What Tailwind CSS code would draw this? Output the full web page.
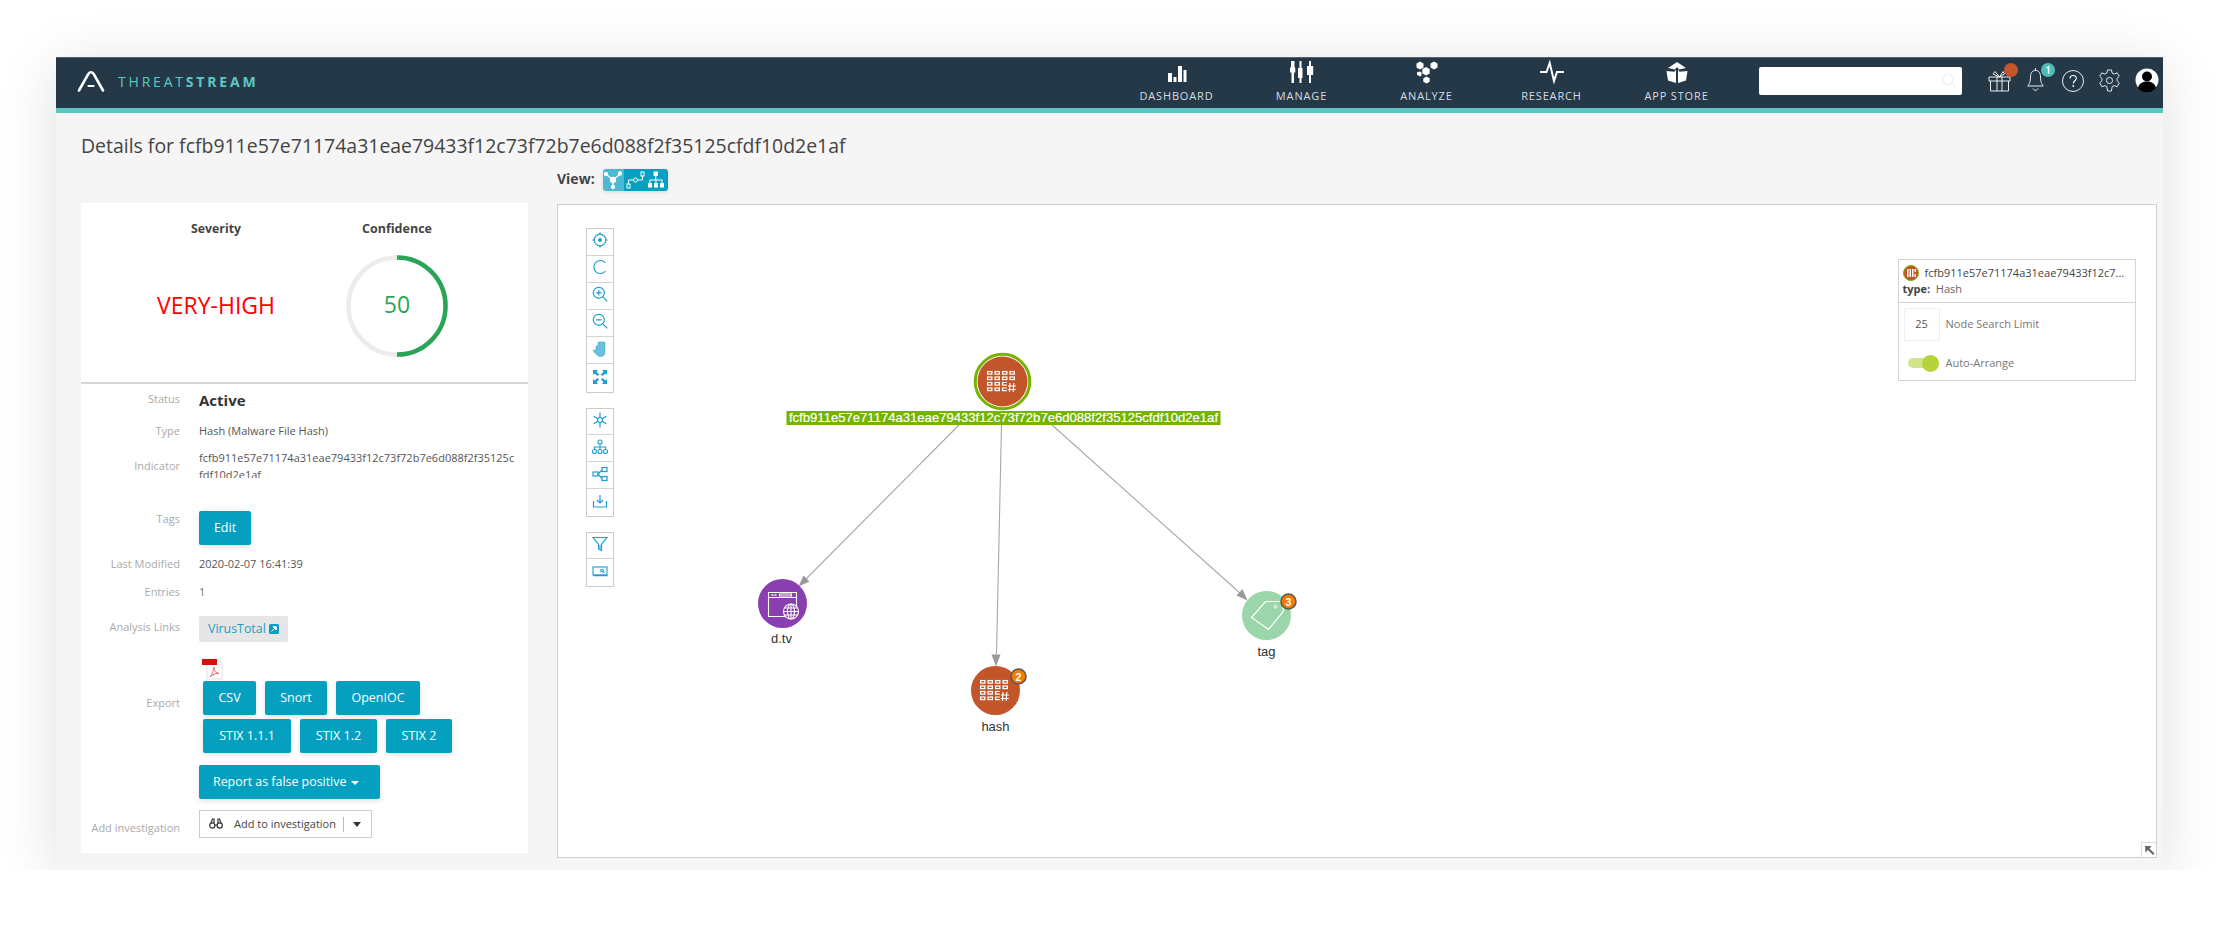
<!DOCTYPE html>
<html lang="en">
<head>
<meta charset="utf-8">
<title>ThreatStream</title>
<script src="https://cdn.jsdelivr.net/npm/@tailwindcss/browser@4"></script>
</head>
<body class="bg-white font-['Open_Sans',sans-serif] text-[#555]">
<svg width="0" height="0" class="absolute">
  <defs>
    <symbol id="hashgrid" viewBox="0 0 28 22" preserveAspectRatio="none">
      <g fill="none" stroke="#fff" stroke-width="1.200">
        <rect x="1" y="1" width="4" height="2.600"/><rect x="8" y="1" width="4" height="2.600"/><rect x="15" y="1" width="4" height="2.600"/><rect x="22" y="1" width="4" height="2.600"/>
        <rect x="1" y="6.500" width="4" height="2.600"/><rect x="8" y="6.500" width="4" height="2.600"/><rect x="15" y="6.500" width="4" height="2.600"/><rect x="22" y="6.500" width="4" height="2.600"/>
        <rect x="1" y="12" width="4" height="2.600"/><rect x="8" y="12" width="4" height="2.600"/><path d="M19 12h-4v2.600h4"/>
        <rect x="1" y="17.500" width="4" height="2.600"/><rect x="8" y="17.500" width="4" height="2.600"/><path d="M19 17.500h-4v2.600h4"/>
        <path d="M22 12.500l-.6 9M25.500 12.500l-.6 9M20 15.500h7.500M19.800 19h7.500" stroke-width="1.100"/>
      </g>
    </symbol>
  </defs>
</svg>

<div class="ml-[56px] mt-[57px] w-[2107px] h-[813px] bg-[#f5f5f5] shadow-[0_8px_55px_rgba(0,0,0,0.13)]">
  <!-- Header -->
  <header class="h-[56px] bg-[#253847] border-t border-[#54636f] border-b-[5px] border-b-[#5bc5c0] flex">
    <div class="flex shrink-0 items-center pl-[21px] w-[1058px] h-[50px]">
      <svg width="28" height="21" viewBox="0 0 28 21" fill="none" stroke="#fff" stroke-width="2.600" stroke-linecap="round" class="-mt-[3px]">
        <path d="M2 19.500 11.200 3.200Q14 -.6 16.800 3.200L26 19.500"/>
        <path d="M11.500 15h5" stroke-width="2.200"/>
      </svg>
      <span class="ml-[13px] -mt-[3px] text-[14px] leading-none tracking-[2.800px] text-[#5cc8c2] whitespace-nowrap">THREAT<b class="font-bold">STREAM</b></span>
    </div>
    <nav class="flex shrink-0 h-[50px] text-white">
      <a class="w-[125px] flex flex-col items-center pt-[2px]">
        <svg width="24" height="24" viewBox="0 0 24 24" fill="#fff"><path d="M3 13h4v9H3zM8.500 17h3v5h-3zM13 6h4v16h-4zM18.500 10h3v12h-3z"/></svg>
        <span class="mt-[5px] text-[11px] leading-[13px] tracking-[.85px] text-[#d5dde1]">DASHBOARD</span>
      </a>
      <a class="w-[125px] flex flex-col items-center pt-[2px]">
        <svg width="26" height="24" viewBox="0 0 26 24" fill="#fff"><path d="M2 1h3.500v6l.8 1v4.500H5v10.500H2.500V12.500H1V8l1-1zM10.500 1h2v7h1v10h-1v5h-2v-5H9V8h1.500zM20 1h2v5h2.200v9H22v8h-2v-8h-2V6h2z"/></svg>
        <span class="mt-[5px] text-[11px] leading-[13px] tracking-[.85px] text-[#d5dde1]">MANAGE</span>
      </a>
      <a class="w-[125px] flex flex-col items-center pt-[2px]">
        <svg width="24" height="24" viewBox="0 0 24 24" fill="#fff"><path d="M5 1.500l3.500 2v4L5 9.500l-3.500-2v-4zM19 1.500l3.500 2v4L19 9.500l-3.500-2v-4zM11 7l3.700 2.100v4.300L11 15.500l-3.700-2.100V9.100zM5 11.500l1.500.9v3.200L5 16.500l-3-1.700v-2.600zM11.500 16.500l3.200 1.800v3.500L11.500 23.500l-3.200-1.700v-3.500z"/></svg>
        <span class="mt-[5px] text-[11px] leading-[13px] tracking-[.85px] text-[#d5dde1]">ANALYZE</span>
      </a>
      <a class="w-[125px] flex flex-col items-center pt-[2px]">
        <svg width="26" height="24" viewBox="0 0 26 24" fill="none" stroke="#fff" stroke-width="2"><path d="M1 12h6.500l3.200-9 4.300 18 3-9h7"/></svg>
        <span class="mt-[5px] text-[11px] leading-[13px] tracking-[.85px] text-[#d5dde1]">RESEARCH</span>
      </a>
      <a class="w-[125px] flex flex-col items-center pt-[2px]">
        <svg width="24" height="24" viewBox="0 0 24 24" fill="#fff"><path d="M3 8 12 2l9 6-7 1.500-2-2.500-2 2.500zM1.500 11l8 .8L11 9.500V23l-8-2.500zM22.500 11l-8 .8L13 9.500V23l8-2.500z"/></svg>
        <span class="mt-[5px] text-[11px] leading-[13px] tracking-[.85px] text-[#d5dde1]">APP STORE</span>
      </a>
    </nav>
    <div class="shrink-0 ml-[20px] mt-[9px] w-[203px] h-[28px] bg-white rounded-[2px] flex items-center justify-end pr-[5px]">
      <svg width="16" height="16" viewBox="0 0 16 16" fill="none" stroke="#f0f0f0" stroke-width="1.200"><circle cx="7" cy="6.500" r="5"/><path d="M10.500 10.500l3.500 4.500"/></svg>
    </div>
    <div class="ml-[25px] flex shrink-0 h-[50px]">
      <div class="relative w-[40px] pt-[12px] pl-[1px]">
        <svg width="23" height="22" viewBox="0 0 23 22" fill="none" stroke="#fff" stroke-width=".9"><path d="M1 7h21v4H1zM2.500 11v10h18V11M9 7v14M14 7v14M11.500 7 7 1.500 5 4l6.500 3 5-3-1.500-2.500z"/></svg>
        <span class="absolute left-[17px] top-[5px] w-[14px] h-[14px] rounded-full bg-[#c6552c]"></span>
      </div>
      <div class="relative w-[35px] pt-[9px]">
        <svg width="17" height="26" viewBox="0 0 17 26" fill="none" stroke="#fff" stroke-width=".9"><path d="M8.500 1v2.500M8.500 3.500c-3.500 0-5 2.500-5 6.500 0 5-1.300 7-2.800 9h15.600c-1.500-2-2.800-4-2.800-9 0-4-1.500-6.500-5-6.500zM6 21.500l2.500 2.500 2.500-2.500"/></svg>
        <span class="absolute left-[14px] top-[5px] w-[14px] h-[14px] rounded-full bg-[#4cbdb8] text-white text-[10px] leading-[14px] text-center font-semibold">1</span>
      </div>
      <svg width="22" height="22" viewBox="0 0 22 22" fill="none" stroke="#fff" stroke-width=".9" class="mt-[12px]"><circle cx="11" cy="11" r="10.500"/><path d="M8 8.500C8 6.500 9.500 5.500 11 5.500c2 0 3.300 1.200 3.300 2.800 0 2.400-3 2.500-3 5.200" stroke-width="1.100"/><circle cx="11.300" cy="16" r=".6" fill="#fff"/></svg>
      <svg width="23" height="23" viewBox="0 0 24 24" fill="none" stroke="#fff" stroke-width=".9" class="mt-[11px] ml-[14px]"><circle cx="12" cy="12" r="3.200"/><path d="M10 1h4l.8 3.300 2 1L20 4l2.200 3.500-2.400 2.300v2.400l2.400 2.300L20 18.500l-3.200-1.200-2 1L14 23h-4l-.8-4.700-2-1L4 18.500 1.800 14.500l2.400-2.300V9.800L1.800 7.500 4 4l3.200 1.300 2-1z"/></svg>
      <svg width="24" height="24" viewBox="0 0 24 24" class="mt-[10px] ml-[14px]"><circle cx="12" cy="12" r="11.500" fill="#fff"/><circle cx="12" cy="8.500" r="5" fill="#000"/><path d="M3 20c1-5 5-6.500 9-6.500s8 1.500 9 6.500a11.500 11.500 0 0 1-18 0z" fill="#000"/></svg>
    </div>
  </header>

  <!-- Main -->
  <main class="pl-[25px] pr-[6px] pt-[20px]">
    <h1 class="h-[26px] text-[19.450px] leading-[26px] text-[#444] font-normal whitespace-nowrap">Details for fcfb911e57e71174a31eae79433f12c73f72b7e6d088f2f35125cfdf10d2e1af</h1>
    <div class="mt-[10px] ml-[476px] h-[22px] flex items-center">
      <span class="text-[14px] font-bold text-[#444] leading-none -mt-[3px]">View:</span>
      <div class="ml-[8px] flex h-[22px] w-[65px] rounded-[3px] overflow-hidden shadow-[0_1px_4px_rgba(0,0,0,0.12)]">
        <span class="w-[22px] bg-[#4db8d2] flex items-center justify-center">
          <svg width="20" height="20" viewBox="0 0 20 20" fill="none" stroke="#fff" stroke-width="1.300"><path d="M3 4l7 6 7-6M10 10v7"/><circle cx="3" cy="4" r="1.500" fill="#fff"/><circle cx="17" cy="3.500" r="1.500" fill="#fff"/><circle cx="10" cy="10" r="2.500" fill="#fff"/><circle cx="10" cy="17" r="1.500" fill="#fff"/></svg>
        </span>
        <span class="flex-1 bg-[#04a0c2] flex items-center justify-around px-[2px]">
          <svg width="20" height="20" viewBox="0 0 20 20" fill="none" stroke="#fff" stroke-width="1"><rect x="1" y="14" width="3" height="4"/><rect x="15" y="2" width="3" height="4"/><circle cx="9.500" cy="10" r="2"/><path d="M2.500 14v-4h5M11.500 10h5V6"/></svg>
          <svg width="20" height="20" viewBox="0 0 20 20" fill="#fff"><rect x="7.500" y="1.500" width="4.500" height="4.500"/><rect x="2" y="13" width="4" height="4.500"/><rect x="8" y="13" width="4" height="4.500"/><rect x="14" y="13" width="4" height="4.500"/><path d="M9.300 6h1v3.500H16.500V13h-1v-2.500h-5V13h-1v-2.500h-5V13h-1V9.500h5.800z"/></svg>
        </span>
      </div>
    </div>

    <div class="mt-[12px] flex items-start">
      <!-- Left panel -->
      <section class="w-[447px] h-[650px] bg-white shrink-0">
        <div class="h-[181px] flex pl-[39px] border-b-[2px] border-[#d6d6d6]">
          <div class="w-[192px] text-center">
            <div class="pt-[18px] text-[12.300px] leading-[16px] font-bold text-[#444]">Severity</div>
            <div class="mt-[54px] text-[23px] leading-[28px] text-[#ff0000] whitespace-nowrap">VERY-HIGH</div>
          </div>
          <div class="w-[170px] flex flex-col items-center">
            <div class="pt-[18px] text-[12.500px] leading-[16px] font-bold text-[#444]">Confidence</div>
            <div class="relative mt-[18px] w-[102px] h-[102px]">
              <svg width="102" height="102" viewBox="0 0 102 102" fill="none" stroke-width="4.500"><circle cx="51" cy="51" r="48.500" stroke="#ececec"/><path d="M51 2.500a48.500 48.500 0 0 1 0 97" stroke="#2aa556"/></svg>
              <span class="absolute inset-0 flex items-center justify-center text-[23px] text-[#2aa556] -mt-[3px]">50</span>
            </div>
          </div>
        </div>

        <div class="flex items-center h-[33px]">
          <span class="w-[99px] text-right text-[11px] text-[#aaa] -mt-[2px]">Status</span>
          <span class="ml-[19px] text-[15px] font-bold text-[#333]">Active</span>
        </div>
        <div class="flex items-center h-[28px]">
          <span class="w-[99px] text-right text-[11px] text-[#aaa]">Type</span>
          <span class="ml-[19px] text-[11px] text-[#555]">Hash (Malware File Hash)</span>
        </div>
        <div class="flex items-start h-[53px] pt-[4px]">
          <span class="w-[99px] text-right text-[11px] text-[#aaa] mt-[9px]">Indicator</span>
          <span class="ml-[19px] w-[317px] h-[29px] overflow-hidden break-all text-[11px] leading-[17px] text-[#555]">fcfb911e57e71174a31eae79433f12c73f72b7e6d088f2f35125cfdf10d2e1af</span>
        </div>
        <div class="flex items-start h-[47px] pt-[13px]">
          <span class="w-[99px] text-right text-[11px] text-[#aaa]">Tags</span>
          <button class="ml-[19px] w-[52px] h-[34px] rounded-[2px] bg-[#05a0c0] text-white text-[12.500px] shadow-[0_2px_5px_rgba(0,0,0,0.12)]">Edit</button>
        </div>
        <div class="flex items-center h-[32px] mt-[3px]">
          <span class="w-[99px] text-right text-[11px] text-[#aaa]">Last Modified</span>
          <span class="ml-[19px] text-[11px] text-[#555]">2020-02-07 16:41:39</span>
        </div>
        <div class="flex items-center h-[24px]">
          <span class="w-[99px] text-right text-[11px] text-[#aaa]">Entries</span>
          <span class="ml-[19px] text-[11px] text-[#777]">1</span>
        </div>
        <div class="flex items-start h-[32px] mt-[12px]">
          <span class="w-[99px] text-right text-[11px] text-[#aaa] mt-[3px]">Analysis Links</span>
          <span class="ml-[19px] w-[89px] h-[26px] bg-[#e6e6e6] rounded-[2px] flex items-center pl-[9px] text-[12.400px] text-[#1c9fc0]">VirusTotal
            <svg width="10" height="10" viewBox="0 0 10 10" class="ml-[3px]"><rect width="10" height="10" rx="1.500" fill="#0a9cc4"/><path d="M2.500 7.500 6.500 3.500M4 2.700h3.300V6z" stroke="#fff" fill="#fff" stroke-width="1"/></svg>
          </span>
        </div>
        <!-- Export -->
        <div class="flex items-start h-[107px] pt-[10px]">
          <span class="w-[99px] text-right text-[11px] text-[#aaa] mt-[37px]">Export</span>
          <div class="ml-[23px]">
            <svg width="22" height="22" viewBox="0 0 22 22" class="-ml-[1px]">
              <path d="M5 1h11l4 4v16H5z" fill="#fff" stroke="#ddd" stroke-width=".8"/>
              <rect x="0" y="1" width="15" height="6" fill="#d2140c"/>
              <path d="M8 19c2-2 3.500-6 4-10 .3 4 2 6 5 6.500-3-.3-7 1-9 3.500z" fill="none" stroke="#e66" stroke-width="1"/>
            </svg>
            <div class="mt-[1px] flex gap-[9px] text-white text-[12.500px]">
              <button class="w-[53px] h-[34px] rounded-[2px] bg-[#05a0c0] shadow-[0_2px_5px_rgba(0,0,0,0.12)]">CSV</button>
              <button class="w-[62px] h-[34px] rounded-[2px] bg-[#05a0c0] shadow-[0_2px_5px_rgba(0,0,0,0.12)]">Snort</button>
              <button class="w-[84px] h-[34px] rounded-[2px] bg-[#05a0c0] shadow-[0_2px_5px_rgba(0,0,0,0.12)]">OpenIOC</button>
            </div>
            <div class="mt-[4px] flex gap-[9px] text-white text-[12.500px]">
              <button class="w-[88px] h-[34px] rounded-[2px] bg-[#05a0c0] shadow-[0_2px_5px_rgba(0,0,0,0.12)]">STIX 1.1.1</button>
              <button class="w-[77px] h-[34px] rounded-[2px] bg-[#05a0c0] shadow-[0_2px_5px_rgba(0,0,0,0.12)]">STIX 1.2</button>
              <button class="w-[66px] h-[34px] rounded-[2px] bg-[#05a0c0] shadow-[0_2px_5px_rgba(0,0,0,0.12)]">STIX 2</button>
            </div>
          </div>
        </div>
        <div class="ml-[118px] mt-[10px] w-[181px] h-[34px] rounded-[2px] bg-[#05a0c0] shadow-[0_2px_5px_rgba(0,0,0,0.12)] text-white text-[12.400px] flex items-center pl-[14px] whitespace-nowrap">Report as false positive
          <span class="ml-[5px] mt-[1px] border-x-[4.500px] border-x-transparent border-t-[4.500px] border-t-white"></span>
        </div>
        <div class="flex items-start mt-[11px]">
          <span class="w-[99px] text-right text-[11px] text-[#aaa] mt-[10px] whitespace-nowrap">Add investigation</span>
          <div class="ml-[19px] w-[173px] h-[28px] border border-[#ccc] flex items-center text-[11px] text-[#444]">
            <svg width="14" height="11" viewBox="0 0 14 11" fill="none" stroke="#333" stroke-width="1.200" class="ml-[9px] -mt-[2px]"><circle cx="3.300" cy="7.500" r="2.600"/><circle cx="10.700" cy="7.500" r="2.600"/><path d="M5.800 7h2.400M2 5l1.500-4h1.500v4M12 5l-1.500-4H9v4"/></svg>
            <span class="ml-[11px] whitespace-nowrap">Add to investigation</span>
            <span class="ml-[7px] h-[15px] border-l border-[#bbb]"></span>
            <span class="ml-[9px] border-x-[4.500px] border-x-transparent border-t-[5px] border-t-[#333]"></span>
          </div>
        </div>
      </section>

      <!-- Graph -->
      <section class="relative mt-[1px] ml-[29px] w-[1600px] h-[654px] shrink-0 bg-white border-[1.500px] border-[#cfcfcf] overflow-hidden">
        <!-- canvas; viewBox uses page coordinates -->
        <svg class="absolute left-0 top-0" width="1597" height="651" viewBox="558.500 205.500 1597 651">
          <g stroke="#a8a8a8" stroke-width="1.100" fill="none">
            <path d="M960 425 805 581M1002 425 997 655M1052 425 1241 594"/>
          </g>
          <g fill="#999">
            <path d="M799 587l5-11 6 6z"/><path d="M996.500 667l-4.500-12h9z"/><path d="M1248 601l-11-5 6-6.500z"/>
          </g>
          <circle cx="1003" cy="382" r="27.300" fill="#fff" stroke="#74b300" stroke-width="3"/>
          <circle cx="1003" cy="382" r="25" fill="#c3552b"/>
          <use href="#hashgrid" x="987" y="371" width="30" height="22"/>
          <rect x="787" y="411.500" width="434" height="14" fill="#74b300"/>
          <text x="1004" y="422.500" text-anchor="middle" fill="#fff" stroke="#fff" stroke-width=".2" font-family="'Liberation Sans',sans-serif" font-size="13.100">fcfb911e57e71174a31eae79433f12c73f72b7e6d088f2f35125cfdf10d2e1af</text>

          <circle cx="783" cy="604" r="24.500" fill="#8a3fb0"/>
          <g fill="none" stroke="#fff" stroke-width="1.100">
            <path d="M797 612v-19h-28v24h18"/>
            <path d="M769 598h28M780 594.500h12v2h-12z"/>
            <path d="M772 595.500h2M775 595.500h2" stroke-width="1.400"/>
            <circle cx="791.500" cy="612" r="7.500" fill="#8a3fb0"/>
            <ellipse cx="791.500" cy="612" rx="3.500" ry="7.500"/>
            <path d="M784 612h15M785 608.500h13M785 615.500h13M791.500 604.500v15"/>
          </g>
          <text x="782" y="643" text-anchor="middle" fill="#333" font-family="'Liberation Sans',sans-serif" font-size="13">d.tv</text>

          <circle cx="996" cy="691" r="24.500" fill="#c3552b"/>
          <use href="#hashgrid" x="980" y="680" width="30" height="22"/>
          <circle cx="1019" cy="677" r="7.500" fill="#f57c00" stroke="#555" stroke-width="1.500"/>
          <text x="1019" y="681" text-anchor="middle" fill="#fff" font-family="'Liberation Sans',sans-serif" font-weight="700" font-size="10.500">2</text>
          <text x="996" y="731" text-anchor="middle" fill="#333" font-family="'Liberation Sans',sans-serif" font-size="13">hash</text>

          <circle cx="1267" cy="616" r="24.500" fill="#9ad6a9"/>
          <path d="M1252 618l14-16h17l.8 10-14.800 18z" fill="none" stroke="#fff" stroke-width="1.200"/>
          <circle cx="1276" cy="607" r="1.500" fill="none" stroke="#fff"/>
          <circle cx="1289" cy="602" r="7.500" fill="#f57c00" stroke="#555" stroke-width="1.500"/>
          <text x="1289" y="606" text-anchor="middle" fill="#fff" font-family="'Liberation Sans',sans-serif" font-weight="700" font-size="10.500">3</text>
          <text x="1267" y="656" text-anchor="middle" fill="#333" font-family="'Liberation Sans',sans-serif" font-size="13">tag</text>
        </svg>

        <!-- Toolbar -->
        <div class="absolute left-[27.500px] top-[22.500px] flex flex-col gap-[15px] text-[#1e9cd0]">
          <div class="w-[28px] border border-[#ccc] divide-y divide-[#d4d4d4] flex flex-col">
            <span class="h-[27.200px] pb-[4px] flex items-center justify-center"><svg width="16" height="16" viewBox="0 0 16 16" fill="none" stroke="currentColor" stroke-width="1.200"><circle cx="8" cy="8" r="5.800"/><circle cx="8" cy="8" r="1.300" fill="currentColor"/><path d="M8 .5v2.500M8 13v2.500M.5 8H3M13 8h2.500"/></svg></span>
            <span class="h-[27.200px] pb-[4px] flex items-center justify-center"><svg width="16" height="16" viewBox="0 0 16 16" fill="none" stroke="currentColor" stroke-width="1.100"><path d="M13.500 4A6.500 6.500 0 1 0 13.500 12"/></svg></span>
            <span class="h-[27.200px] pb-[4px] flex items-center justify-center"><svg width="16" height="16" viewBox="0 0 16 16" fill="none" stroke="currentColor" stroke-width="1.200"><circle cx="6.800" cy="6.800" r="5.500"/><path d="M4 6.800h5.600M6.800 4v5.600M10.800 10.800l4.500 4.500"/></svg></span>
            <span class="h-[27.200px] pb-[4px] flex items-center justify-center"><svg width="16" height="16" viewBox="0 0 16 16" fill="none" stroke="currentColor" stroke-width="1.200"><circle cx="6.800" cy="6.800" r="5.500"/><path d="M4 6.800h5.600M10.800 10.800l4.500 4.500"/></svg></span>
            <span class="h-[27.200px] pb-[2px] flex items-center justify-center"><svg width="15" height="16" viewBox="0 0 15 16" fill="currentColor" stroke="currentColor" stroke-width=".5"><path d="M6 5V2a1 1 0 0 1 1-1h5a1 1 0 0 1 1 1v9c0 3-2 4.500-4.500 4.500S5 14 3 12L1 9.500c.8-1 2-.6 3 0V5z" fill-opacity=".65"/></svg></span>
            <span class="h-[27.200px] pb-[2px] flex items-center justify-center"><svg width="16" height="16" viewBox="0 0 16 16" fill="currentColor"><path d="M1 1h5L4.500 2.800 7 5.500 5.500 7 2.800 4.500 1 6zM15 1v5l-1.800-1.500L10.500 7 9 5.500l2.500-2.700L10 1zM1 15v-5l1.800 1.500L5.500 9 7 10.500l-2.500 2.700L6 15zM15 15h-5l1.500-1.800L9 10.500 10.500 9l2.700 2.500L15 10z"/></svg></span>
          </div>
          <div class="w-[28px] border border-[#ccc] divide-y divide-[#d4d4d4] flex flex-col">
            <span class="h-[26.800px] pb-[3px] flex items-center justify-center"><svg width="16" height="16" viewBox="0 0 16 16" fill="none" stroke="currentColor" stroke-width="1.200"><circle cx="8" cy="8" r="2.500"/><path d="M8 .5v5M8 10.500v5M1.500 4.200 5.800 6.800M10.200 9.200l4.300 2.600M1.500 11.800l4.300-2.600M10.200 6.800l4.300-2.600"/></svg></span>
            <span class="h-[26.800px] pb-[3px] flex items-center justify-center"><svg width="16" height="16" viewBox="0 0 16 16" fill="none" stroke="currentColor" stroke-width="1.100"><circle cx="8" cy="3" r="2"/><circle cx="2.500" cy="12.500" r="2"/><circle cx="8" cy="12.500" r="2"/><circle cx="13.500" cy="12.500" r="2"/><path d="M8 5v5.500M2.500 10.500V8h11v2.500"/></svg></span>
            <span class="h-[26.800px] pb-[3px] flex items-center justify-center"><svg width="16" height="16" viewBox="0 0 16 16" fill="none" stroke="currentColor" stroke-width="1.200"><rect x="1" y="6" width="5" height="4"/><rect x="10" y="1.500" width="5" height="4"/><rect x="10" y="10.500" width="5" height="4"/><path d="M6 8l4-4M6 8l4 4.500"/></svg></span>
            <span class="h-[26.800px] pb-[3px] flex items-center justify-center"><svg width="16" height="16" viewBox="0 0 16 16" fill="none" stroke="currentColor" stroke-width="1.200"><path d="M1.500 8v6h13V8M8 2v7.500M5 7l3 3 3-3"/></svg></span>
          </div>
          <div class="w-[28px] border border-[#ccc] divide-y divide-[#d4d4d4] flex flex-col">
            <span class="h-[26.500px] pb-[4px] flex items-center justify-center"><svg width="16" height="16" viewBox="0 0 16 16" fill="none" stroke="currentColor" stroke-width="1.200"><path d="M1 1.500h14L9.500 8.500v6l-3-1.500V8.500z"/><path d="M6.800 9h2.400v4.500H6.800z" fill="currentColor" fill-opacity=".5" stroke="none"/></svg></span>
            <span class="h-[26.500px] pb-[3px] flex items-center justify-center"><svg width="16" height="12" viewBox="0 0 16 12" fill="none" stroke="currentColor" stroke-width="1.100"><rect x="1" y="2" width="14" height="8"/><path d="M1.500 10.500h14" stroke-width="1.500"/><circle cx="10" cy="5.500" r="1.300"/><path d="M11 6.500l1.500 1.500"/></svg></span>
          </div>
        </div>

        <!-- Legend -->
        <aside class="absolute left-[1339.500px] top-[53.500px] w-[238px] h-[122px] bg-white border border-[#d4d4d4]">
          <div class="h-[43px] border-b border-[#d4d4d4] pl-[4px] pt-[5px]">
            <div class="flex items-center h-[16px] text-[11px] leading-none text-[#444]">
              <svg width="16" height="16" viewBox="0 0 16 16"><circle cx="8" cy="8" r="7.500" fill="#c3552b" stroke="#74b300"/><path d="M4 4h1.500v8H4zM6.500 4H8v8H6.500zM9 4h1.500v8H9zM11.500 4H13v3h-1.500zM11.500 9H13v3h-1.500z" fill="#fff"/></svg>
              <span class="ml-[6px] whitespace-nowrap">fcfb911e57e71174a31eae79433f12c7...</span>
            </div>
            <div class="text-[11px] leading-[16px] text-[#666]"><b class="text-[#444]">type:</b>&nbsp; Hash</div>
          </div>
          <div class="flex items-center mt-[5px] pl-[5px] h-[33px] text-[11px] text-[#777]">
            <span class="w-[36px] h-[33px] border border-[#eee] rounded-[2px] flex items-center justify-center text-[#555]">25</span>
            <span class="ml-[6px]">Node Search Limit</span>
          </div>
          <div class="flex items-center mt-[14px] pl-[9px] h-[17px] text-[11px] text-[#777]">
            <span class="relative w-[31px] h-[10px] rounded-full bg-[#d3e58c]">
              <span class="absolute right-0 -top-[3.500px] w-[17px] h-[17px] rounded-full bg-[#b5d43c]"></span>
            </span>
            <span class="ml-[7px]">Auto-Arrange</span>
          </div>
        </aside>

        <span class="absolute right-0 bottom-0 w-[15px] h-[15px] border-l border-t border-[#ddd] bg-white flex items-center justify-center">
          <svg width="11" height="11" viewBox="0 0 11 11" fill="#666"><path d="M1 1h6.500L5.500 3.500 10.500 8.500 9 10 4 5 1.500 7.500z"/></svg>
        </span>
      </section>
    </div>
  </main>
</div>
</body>
</html>
